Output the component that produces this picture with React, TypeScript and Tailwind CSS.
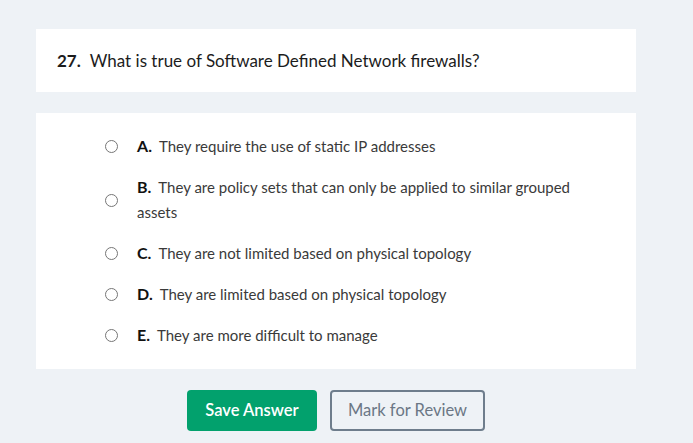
const options = [
  { key: "A", text: "They require the use of static IP addresses" },
  { key: "B", text: "They are policy sets that can only be applied to similar grouped assets" },
  { key: "C", text: "They are not limited based on physical topology" },
  { key: "D", text: "They are limited based on physical topology" },
  { key: "E", text: "They are more difficult to manage" },
];

export default function App() {
  return (
    <div className="min-h-[443px] w-full bg-[#eef2f6] pt-[29px] font-['Lato',sans-serif]">
      <div className="ml-[36px] w-[600px]">
        <div className="flex h-[63px] items-center bg-white pl-[21px] text-[17px] text-[#1c1c1c]">
          <span className="font-bold">27.</span>
          <span className="ml-[9px]">What is true of Software Defined Network firewalls?</span>
        </div>

        <div className="mt-[21px] flex flex-col gap-[16px] bg-white pb-[21px] pl-[69px] pt-[21px]">
          {options.map((o) => (
            <label key={o.key} className="flex cursor-pointer items-center">
              <span className="h-[13px] w-[13px] shrink-0 rounded-full border border-[#767676] bg-white" />
              <div className="ml-[19px] max-w-[450px] text-[15px] leading-[25px] text-[#3a3a3a]">
                <span className="mr-[7px] text-[16px] font-bold leading-none text-[#111]">{o.key}.</span>
                {o.text}
              </div>
            </label>
          ))}
        </div>

        <div className="mt-[21px] flex justify-center gap-[13px]">
          <button className="h-[41px] w-[130px] rounded-[4px] bg-[#02a16d] text-[16.5px] font-semibold text-white">
            Save Answer
          </button>
          <button className="h-[41px] w-[155px] rounded-[4px] border-2 border-[#6e7d8c] text-[16.5px] text-[#6b7785]">
            Mark for Review
          </button>
        </div>
      </div>
    </div>
  );
}
